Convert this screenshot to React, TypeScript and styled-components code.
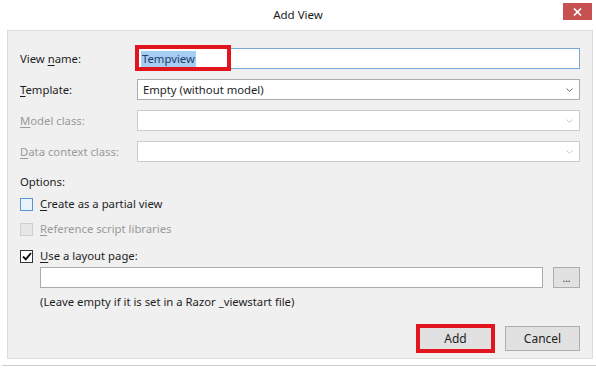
import React from "react";
import styled, { createGlobalStyle } from "styled-components";

const Global = createGlobalStyle`
  html, body { margin: 0; padding: 0; background: #ffffff; }
  body { font-family: "Noto Sans", "Open Sans", sans-serif; font-size: 11.3px; color: #1e1e1e; }
  * { box-sizing: border-box; }
`;

const Window = styled.div`
  width: 596px;
  height: 369px;
  background: #ffffff;
  display: flex;
  flex-direction: column;
  overflow: hidden;
`;

const TitleBar = styled.div`
  height: 30px;
  display: grid;
  grid-template-columns: 1fr auto 1fr;
  align-items: start;
`;

const Title = styled.div`
  grid-column: 2;
  padding-top: 7px;
  font-size: 11.5px;
  color: #1a1a1a;
`;

const CloseButton = styled.div`
  grid-column: 3;
  justify-self: end;
  margin: 3px 4px 0 0;
  width: 29px;
  height: 17px;
  background: #c75050;
  display: flex;
  align-items: center;
  justify-content: center;
`;

const Panel = styled.div`
  margin: 0 3px 0 7px;
  height: 329px;
  border: 1px solid #dcdcdc;
  background: #f0f0f0;
  padding: 17px 12px 0 12px;
  display: flex;
  flex-direction: column;
`;

const FormGrid = styled.div`
  display: grid;
  grid-template-columns: 117px 1fr;
  grid-auto-rows: 21px;
  row-gap: 10px;
  align-items: center;
`;

const Label = styled.div<{ $disabled?: boolean }>`
  color: ${(p) => (p.$disabled ? "#9a9a9a" : "#1e1e1e")};
  white-space: nowrap;
  line-height: 16px;
`;

const U = styled.span`
  text-decoration: underline;
  text-underline-offset: 2px;
`;

const TextField = styled.div<{ $focused?: boolean }>`
  position: relative;
  height: 21px;
  background: #ffffff;
  border: 1px solid ${(p) => (p.$focused ? "#7ba7d8" : "#ababab")};
  display: flex;
  align-items: center;
  padding-left: 3px;
`;

const Selected = styled.span`
  background: #a6cdf2;
  color: #1f3c6b;
  line-height: 16px;
  padding: 0 1px;
`;

const Annotation = styled.span<{ $w: number }>`
  position: absolute;
  left: -3px;
  top: -4px;
  width: ${(p) => p.$w}px;
  height: 26px;
  border: 4px solid #e2141d;
  pointer-events: none;
`;

const Select = styled.div<{ $disabled?: boolean }>`
  height: 21px;
  background: #ffffff;
  border: 1px solid ${(p) => (p.$disabled ? "#cccccc" : "#acacac")};
  display: flex;
  align-items: center;
  justify-content: space-between;
  padding: 0 6px 0 5px;
  color: #1e1e1e;
`;

const Chevron = ({ disabled }: { disabled?: boolean }) => (
  <svg width="7" height="4" viewBox="0 0 7 4">
    <path d="M0.5 0.5 L3.5 3.3 L6.5 0.5" fill="none" stroke={disabled ? "#c8c8c8" : "#707070"} strokeWidth="1" />
  </svg>
);

const SectionLabel = styled.div`
  margin-top: 12px;
  line-height: 16px;
  color: #1e1e1e;
`;

const CheckRow = styled.div<{ $top: number; $disabled?: boolean }>`
  margin-top: ${(p) => p.$top}px;
  display: flex;
  align-items: center;
  gap: 7px;
  height: 16px;
  line-height: 16px;
  color: ${(p) => (p.$disabled ? "#9a9a9a" : "#1e1e1e")};
`;

const Box = styled.div<{ $variant: "hover" | "disabled" | "checked" }>`
  width: 13px;
  height: 13px;
  flex: none;
  display: flex;
  align-items: center;
  justify-content: center;
  border: 1px solid
    ${(p) => (p.$variant === "hover" ? "#5b93d3" : p.$variant === "disabled" ? "#cfcfcf" : "#333333")};
  background: ${(p) => (p.$variant === "hover" ? "#eaf3fc" : p.$variant === "disabled" ? "#e6e6e6" : "#ffffff")};
`;

const LayoutRow = styled.div`
  margin-top: 3px;
  margin-left: 20px;
  display: flex;
  gap: 10px;
  height: 21px;
`;

const LayoutField = styled.div`
  flex: 1;
  background: #ffffff;
  border: 1px solid #ababab;
`;

const BrowseButton = styled.div`
  width: 27px;
  height: 21px;
  background: #e1e1e1;
  border: 1px solid #adadad;
  display: flex;
  align-items: flex-end;
  justify-content: center;
  padding-bottom: 4px;
  font-size: 10px;
  line-height: 10px;
  color: #333;
`;

const Hint = styled.div`
  margin-top: 6px;
  margin-left: 20px;
  line-height: 16px;
  color: #1e1e1e;
`;

const ButtonRow = styled.div`
  margin-top: 16px;
  display: flex;
  justify-content: flex-end;
  gap: 12px;
`;

const Button = styled.div<{ $marked?: boolean }>`
  width: 75px;
  height: 25px;
  background: #e1e1e1;
  border: 1px solid #adadad;
  display: flex;
  align-items: center;
  justify-content: center;
  font-size: 12px;
  color: #1e1e1e;
  outline: ${(p) => (p.$marked ? "4px solid #e2141d" : "none")};
  outline-offset: -2px;
`;

const BottomEdge = styled.div`
  margin: 6px 0 0 2px;
  border-top: 1px solid #cfcfcf;
`;

export default function App() {
  return (
    <>
      <Global />
      <Window>
        <TitleBar>
          <Title>Add View</Title>
          <CloseButton>
            <svg width="9" height="8" viewBox="0 0 9 8">
              <path d="M1 0.5 L8 7.5 M8 0.5 L1 7.5" stroke="#ffffff" strokeWidth="1.7" />
            </svg>
          </CloseButton>
        </TitleBar>
        <Panel>
          <FormGrid>
            <Label>
              View <U>n</U>ame:
            </Label>
            <TextField $focused>
              <Selected>Tempview</Selected>
              <Annotation $w={96} />
            </TextField>
            <Label>
              <U>T</U>emplate:
            </Label>
            <Select>
              <span>Empty (without model)</span>
              <Chevron />
            </Select>
            <Label $disabled>
              <U>M</U>odel class:
            </Label>
            <Select $disabled>
              <span />
              <Chevron disabled />
            </Select>
            <Label $disabled>
              <U>D</U>ata context class:
            </Label>
            <Select $disabled>
              <span />
              <Chevron disabled />
            </Select>
          </FormGrid>
          <SectionLabel>Options:</SectionLabel>
          <CheckRow $top={6}>
            <Box $variant="hover" />
            <span>
              <U>C</U>reate as a partial view
            </span>
          </CheckRow>
          <CheckRow $top={9} $disabled>
            <Box $variant="disabled" />
            <span>
              <U>R</U>eference script libraries
            </span>
          </CheckRow>
          <CheckRow $top={11}>
            <Box $variant="checked">
              <svg width="10" height="9" viewBox="0 0 10 9">
                <path d="M1 4.5 L3.8 7.3 L9 1" fill="none" stroke="#111" strokeWidth="1.9" />
              </svg>
            </Box>
            <span>
              <U>U</U>se a layout page:
            </span>
          </CheckRow>
          <LayoutRow>
            <LayoutField />
            <BrowseButton>...</BrowseButton>
          </LayoutRow>
          <Hint>(Leave empty if it is set in a Razor _viewstart file)</Hint>
          <ButtonRow>
            <Button $marked>Add</Button>
            <Button>Cancel</Button>
          </ButtonRow>
        </Panel>
        <BottomEdge />
      </Window>
    </>
  );
}
